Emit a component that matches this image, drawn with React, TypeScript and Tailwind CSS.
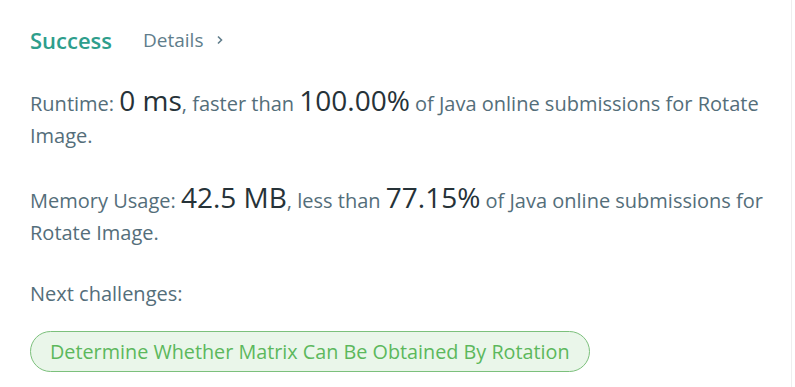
export default function App(): JSX.Element {
  return (
    <div className="w-[795px] h-[387px] bg-white flex font-['Open_Sans',sans-serif]">
      <div className="flex-1 pl-[30px] pr-4 pt-[24px] text-[#546e7a]">
        <div className="flex items-center gap-[31px] h-[32px]">
          <span className="text-[22px] font-semibold text-[#2e9e8c]">Success</span>
          <span className="flex items-center gap-[12px] text-[19px] text-[#607d8b]">
            Details
            <svg className="w-[10px] h-[10px]" viewBox="0 0 10 10" fill="none" stroke="#607d8b" strokeWidth="1.6">
              <path d="M3 1.5 L6.5 5 L3 8.5" />
            </svg>
          </span>
        </div>

        <p className="mt-[28px] text-[20px] leading-[32px] w-[740px]">
          Runtime: <span className="text-[28px] text-[#263238]">0 ms</span>, faster than{' '}
          <span className="text-[28px] text-[#263238]">100.00%</span> of Java online submissions for Rotate Image.
        </p>

        <p className="mt-[29px] text-[20px] leading-[32px] w-[745px]">
          Memory Usage: <span className="text-[28px] text-[#263238]">42.5 MB</span>, less than{' '}
          <span className="text-[28px] text-[#263238]">77.15%</span> of Java online submissions for Rotate Image.
        </p>

        <p className="mt-[32px] text-[20px] leading-[26px]">Next challenges:</p>

        <div className="mt-[24px] flex">
          <span className="rounded-full border border-[#7cc07c] bg-[#eaf6ea] px-[19px] h-[41px] flex items-center text-[19.8px] text-[#5cb85c]">
            Determine Whether Matrix Can Be Obtained By Rotation
          </span>
        </div>
      </div>
      <div className="w-px bg-[#eeeeee] mr-[3px]" />
    </div>
  );
}
